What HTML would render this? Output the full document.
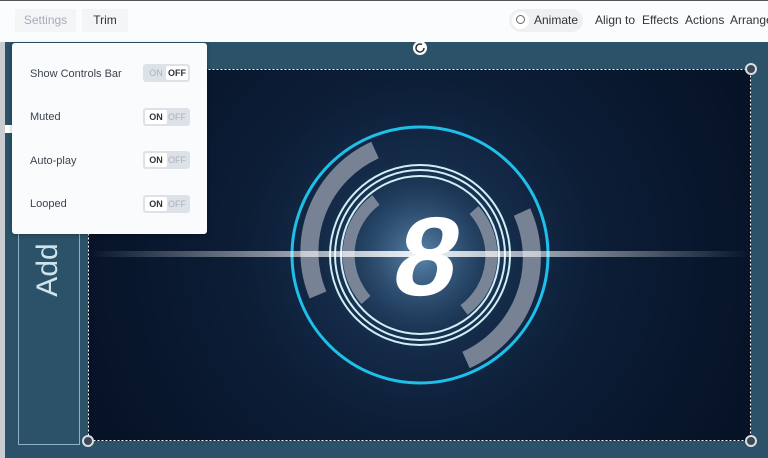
<!DOCTYPE html>
<html><head><style>
*{margin:0;padding:0;box-sizing:border-box}
body{width:768px;height:458px;overflow:hidden;background:#2b5268;font-family:"Liberation Sans",sans-serif;position:relative}
.top{position:absolute;left:0;top:0;width:768px;height:42px;background:#fbfcfd;border-top:1px solid #555;}
.tb{position:absolute;top:9px;height:23px;line-height:23px;font-size:12px;color:#333;}
.lg{position:absolute;left:0;top:42px;width:5px;height:416px;background:#c9cdd0}
.menu{position:absolute;left:12px;top:43px;width:195px;height:191px;background:#fafbfc;border-radius:3px;box-shadow:0 1px 4px rgba(0,0,0,.3)}
.row{position:absolute;left:18px;font-size:11px;color:#3a4450}
.tg{position:absolute;left:131px;width:47px;height:18px;background:#dde2e8;border-radius:3px;font-size:9px;font-weight:bold}
.tg span{position:absolute;top:2px;height:14px;line-height:14px;width:22px;text-align:center;border-radius:2px}
</style></head><body>
<div class="top"></div>
<div class="tb" style="left:15px;width:61px;background:#f3f5f7;color:#aab;text-align:center">Settings</div>
<div class="tb" style="left:82px;width:46px;background:#f3f5f7;text-align:center">Trim</div>
<div class="tb" style="left:509px;width:74px;background:#eef1f4;border-radius:12px;padding-left:25px">Animate</div>
<div style="position:absolute;left:512px;top:12px;width:17px;height:17px;border-radius:50%;background:#fff"></div>
<div style="position:absolute;left:516px;top:15px;width:9px;height:9px;border-radius:50%;border:1.5px solid #666"></div>
<div class="tb" style="left:595px">Align to</div>
<div class="tb" style="left:642px">Effects</div>
<div class="tb" style="left:685px">Actions</div>
<div class="tb" style="left:730px">Arrange</div>
<div class="lg"></div>
<div style="position:absolute;left:5px;top:125px;width:10px;height:8px;background:#fff"></div>
<div style="position:absolute;left:18px;top:125px;width:62px;height:320px;border:1px solid #8fb0c0"></div>
<div style="position:absolute;left:48px;top:270px;transform:translate(-50%,-50%) rotate(-90deg);color:#cfe3ec;font-size:30px;white-space:nowrap">Add</div>
<svg style="position:absolute;left:0;top:0" width="768" height="458">
<defs>
<radialGradient id="bg" cx="420" cy="255" r="360" gradientUnits="userSpaceOnUse"><stop offset="0" stop-color="#1d3a5c"/><stop offset="0.5" stop-color="#0c1d36"/><stop offset="1" stop-color="#061226"/></radialGradient>
<radialGradient id="gl" cx="420" cy="255" r="100" gradientUnits="userSpaceOnUse"><stop offset="0" stop-color="#6a9ac0" stop-opacity=".8"/><stop offset="1" stop-color="#1d3a5c" stop-opacity="0"/></radialGradient>
<linearGradient id="fl" x1="0" x2="1"><stop offset="0" stop-color="#fff" stop-opacity="0"/><stop offset=".5" stop-color="#fff" stop-opacity=".9"/><stop offset="1" stop-color="#fff" stop-opacity="0"/></linearGradient>
</defs>
<rect x="88" y="69" width="663" height="372" fill="url(#bg)"/>
<circle cx="420" cy="255" r="100" fill="url(#gl)"/>
<g fill="none" stroke="#8a93a2" stroke-opacity=".85">
<path d="M375 150 A112 112 0 0 0 318 295" stroke-width="18"/>
<path d="M466 360 A112 112 0 0 0 522 212" stroke-width="18"/>
<path d="M376 200 A68 68 0 0 0 366 300" stroke-width="12"/>
<path d="M464 310 A68 68 0 0 0 474 210" stroke-width="12"/>
</g>
<circle cx="420" cy="255" r="128" fill="none" stroke="#1ec0ea" stroke-width="3"/>
<g fill="none" stroke="#cfeef5" stroke-width="2">
<circle cx="420" cy="255" r="90"/><circle cx="420" cy="255" r="85"/><circle cx="420" cy="255" r="79"/></g>
<rect x="88" y="251" width="663" height="6" fill="url(#fl)"/>
<text x="0" y="0" transform="translate(420 295) skewX(-12)" text-anchor="middle" font-family="Liberation Sans" font-weight="bold" font-size="112" fill="#fff">8</text>
<rect x="88.5" y="69.5" width="662" height="371" fill="none" stroke="#fff" stroke-dasharray="2 2" stroke-width="1"/>
<g fill="#3a4a5c" stroke="#ddd" stroke-width="2">
<circle cx="751" cy="69" r="5"/><circle cx="88" cy="441" r="5"/><circle cx="751" cy="441" r="5"/></g>
<circle cx="420" cy="48" r="7" fill="#fff"/>
<path d="M424 48 A4 4 0 1 1 422 44.5" fill="none" stroke="#333" stroke-width="1.5"/>
</svg>
<div class="menu">
<div class="row" style="top:25px">Show Controls Bar</div>
<div class="tg" style="top:21px"><span style="left:2px;color:#aab2bc;font-weight:normal">ON</span><span style="left:23px;background:#fff;color:#333">OFF</span></div>
<div class="row" style="top:68px">Muted</div>
<div class="tg" style="top:65px"><span style="left:2px;background:#fff;color:#333">ON</span><span style="left:23px;color:#aab2bc;font-weight:normal">OFF</span></div>
<div class="row" style="top:112px">Auto-play</div>
<div class="tg" style="top:108px"><span style="left:2px;background:#fff;color:#333">ON</span><span style="left:23px;color:#aab2bc;font-weight:normal">OFF</span></div>
<div class="row" style="top:155px">Looped</div>
<div class="tg" style="top:152px"><span style="left:2px;background:#fff;color:#333">ON</span><span style="left:23px;color:#aab2bc;font-weight:normal">OFF</span></div>
</div>
</body></html>
